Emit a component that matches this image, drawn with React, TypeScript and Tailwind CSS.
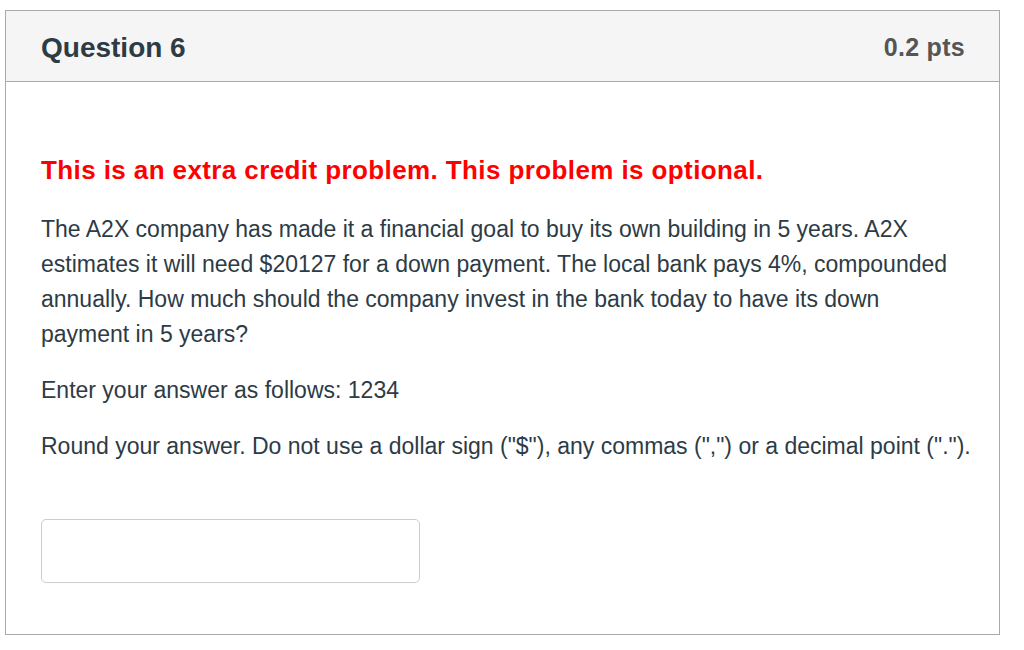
export default function App() {
  return (
    <div className="w-[1024px] h-[650px] bg-white pt-[10px] pl-[5px]" style={{ fontFamily: '"Liberation Sans", Arial, sans-serif' }}>
      <div className="w-[995px] h-[625px] border border-[#aaaaaa] flex flex-col">
        <div className="h-[71px] bg-[#f5f5f5] border-b border-[#aaaaaa] flex items-center justify-between pl-[35px] pr-[34px] pt-[3px]">
          <div className="text-[28px] font-bold text-[#2d3b45] leading-none">Question 6</div>
          <div className="text-[25px] font-bold text-[#555555] leading-none tracking-[0.3px]">0.2 pts</div>
        </div>
        <div className="pl-[35px] pr-[20px] pt-[73px] text-[#2d3b45]">
          <p className="text-[26px] font-bold text-[#ff0000] leading-[30px] tracking-[0.4px]">This is an extra credit problem. This problem is optional.</p>
          <p className="mt-[26.5px] text-[23px] leading-[35.3px]">
            The A2X company has made it a financial goal to buy its own building in 5 years. A2X<br />
            estimates it will need $20127 for a down payment. The local bank pays 4%, compounded<br />
            annually. How much should the company invest in the bank today to have its down<br />
            payment in 5 years?
          </p>
          <p className="mt-[20.7px] text-[23px] leading-[35.3px]">Enter your answer as follows: 1234</p>
          <p className="mt-[20.7px] text-[23px] leading-[35.3px]">Round your answer. Do not use a dollar sign ("$"), any commas (",") or a decimal point (".").</p>
          <input type="text" className="block mt-[54.5px] w-[379px] h-[64px] border border-[#cccccc] rounded-[5px] bg-white" />
        </div>
      </div>
    </div>
  );
}
